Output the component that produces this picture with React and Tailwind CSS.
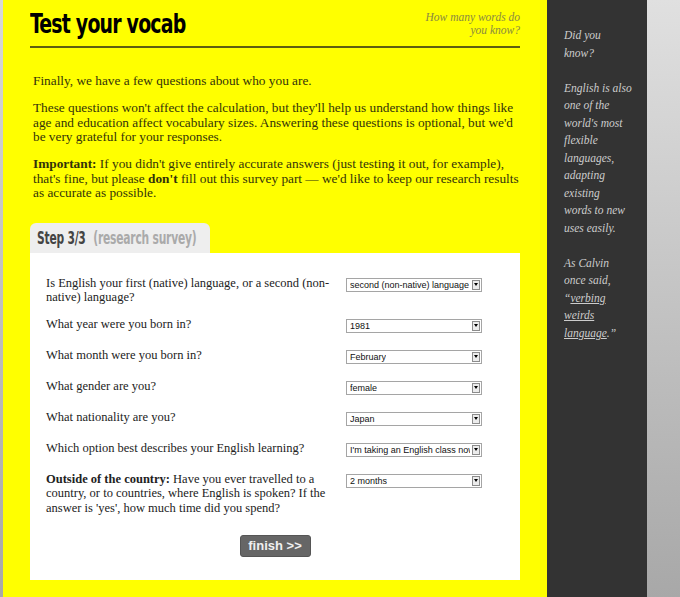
export default function App() {
  const questions = [
    { label: "Is English your first (native) language, or a second (non-native) language?", value: "second (non-native) language" },
    { label: "What year were you born in?", value: "1981" },
    { label: "What month were you born in?", value: "February" },
    { label: "What gender are you?", value: "female" },
    { label: "What nationality are you?", value: "Japan" },
    { label: "Which option best describes your English learning?", value: "I'm taking an English class now" },
    {
      label: (
        <>
          <b>Outside of the country:</b> Have you ever travelled to a country, or to countries, where English is
          spoken? If the answer is 'yes', how much time did you spend?
        </>
      ),
      value: "2 months",
    },
  ]

  return (
    <div className="flex h-[597px] w-[680px] overflow-hidden font-['Liberation_Serif',serif]">
      <div className="w-[3px] shrink-0 bg-gradient-to-b from-[#d8d8d8] to-[#a8a8a8]" />

      {/* main column */}
      <div className="w-[544px] shrink-0 bg-[#ffff00] pl-[27px] pr-[27px]">
        <div className="flex h-[46px] items-start justify-between">
          <h1 className="mt-[9px] origin-left scale-x-[0.81] whitespace-nowrap font-['DejaVu_Sans_Condensed',sans-serif] text-[26px] font-bold leading-[30px] tracking-[-1px] text-black">
            Test your vocab
          </h1>
          <p className="mt-[11px] text-right text-[11.5px] italic leading-[13px] text-[#8a8a40]">
            How many words do
            <br />
            you know?
          </p>
        </div>
        <div className="h-[2px] bg-[#5e5e10]" />

        <div className="pl-[3px] pt-[26px] text-[13.3px] leading-[14.5px] text-[#33330a]">
          <p className="mb-[12.5px]">Finally, we have a few questions about who you are.</p>
          <p className="mb-[12.5px]">
            These questions won't affect the calculation, but they'll help us understand how things like age and
            education affect vocabulary sizes. Answering these questions is optional, but we'd be very grateful for
            your responses.
          </p>
          <p>
            <b>Important:</b> If you didn't give entirely accurate answers (just testing it out, for example), that's
            fine, but please <b>don't</b> fill out this survey part — we'd like to keep our research results as
            accurate as possible.
          </p>
        </div>

        {/* tab */}
        <div className="mt-[22px] flex h-[30px] w-[180px] items-center overflow-hidden rounded-t-[6px] bg-[#eeeeee] pl-[7px]">
          <span className="origin-left scale-x-[0.7] whitespace-nowrap font-['DejaVu_Sans_Condensed',sans-serif] text-[17px] font-bold leading-[20px] tracking-[-0.3px]">
            <span className="text-[#444]">Step 3/3</span>
            <span className="ml-[11px] text-[#aaaaaa]">(research survey)</span>
          </span>
        </div>

        {/* form panel */}
        <div className="h-[327px] bg-white pl-[16px] pt-[23px] text-[12.5px] leading-[14.5px] text-[#222]">
          {questions.map((q, i) => (
            <div key={i} className="mb-[12px] flex min-h-[19px] items-start">
              <div className="w-[290px]">{q.label}</div>
              <div className="ml-[10px] mt-[2px] flex h-[14px] w-[136px] items-center justify-between border border-[#a5a5a5] bg-white pl-[3px] pr-[1px]">
                <span className="overflow-hidden whitespace-nowrap font-['Liberation_Sans',sans-serif] text-[9px] leading-[12px] text-[#111]">
                  {q.value}
                </span>
                <span className="ml-[2px] flex h-[10px] w-[8px] shrink-0 items-center justify-center border border-[#8c8c8c] bg-[#ececec]">
                  <span className="h-0 w-0 border-x-[2.5px] border-t-[3px] border-x-transparent border-t-black" />
                </span>
              </div>
            </div>
          ))}
          <div className="mt-[20px] flex justify-center pr-[16px]">
            <button className="h-[22px] w-[71px] rounded-[3px] border border-[#555] bg-[#666] font-['Liberation_Sans',sans-serif] text-[13px] font-bold leading-[20px] text-[#f0f0f0]">
              finish &gt;&gt;
            </button>
          </div>
        </div>
      </div>

      {/* sidebar */}
      <div className="w-[100px] shrink-0 whitespace-nowrap bg-[#333333] pl-[17px] pt-[27px] text-[11.5px] italic leading-[17.5px] text-[#cccccc]">
        <p className="mb-[17.5px]">
          Did you
          <br />
          know?
        </p>
        <p className="mb-[17.5px]">
          English is also
          <br />
          one of the
          <br />
          world's most
          <br />
          flexible
          <br />
          languages,
          <br />
          adapting
          <br />
          existing
          <br />
          words to new
          <br />
          uses easily.
        </p>
        <p>
          As Calvin
          <br />
          once said,
          <br />“<span className="underline">verbing</span>
          <br />
          <span className="underline">weirds</span>
          <br />
          <span className="underline">language</span>.”
        </p>
      </div>

      <div className="flex-1 bg-gradient-to-b from-[#e0e0e0] to-[#a8a8a8]" />
    </div>
  )
}
